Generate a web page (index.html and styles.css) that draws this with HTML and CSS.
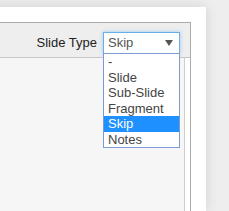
FILE: index.html
```html
<!DOCTYPE html>
<html>
<head>
    <meta charset="UTF-8">
    <meta name="viewport" content="width=device-width, initial-scale=1.0">
    <title>Slide Type</title>
    <link rel="stylesheet" href="styles.css">
</head>
<body>

    <div class="panel">
        <div class="cell">
            <div class="toolbar">
                <span class="toolbar-label">Slide Type</span>
                <div class="picker">
                    <div class="picker-value">Skip</div>
                    <svg class="picker-arrow" width="8" height="6" viewBox="0 0 8 6"><path d="M0 0 H8 L4 6 Z" fill="#555"/></svg>
                    <ul class="picker-list">
                        <li>-</li>
                        <li>Slide</li>
                        <li>Sub-Slide</li>
                        <li>Fragment</li>
                        <li class="selected">Skip</li>
                        <li>Notes</li>
                    </ul>
                </div>
            </div>
            <div class="cell-frame">
                <div class="cell-body"></div>
            </div>
        </div>
    </div>

</body>
</html>
```

FILE: styles.css
```css
html, body {
    height: 100%;
}
body {
    margin: 0;
    font-family: "Liberation Sans", Arial, sans-serif;
    font-size: 13px;
    background-color: #eeeeee;
    overflow: hidden;
}
.panel {
    margin-top: 7px;
    margin-left: -20px;
    width: 226px;
    height: calc(100% - 7px);
    padding-top: 15px;
    background-color: #ffffff;
    box-shadow: 0 0 12px rgba(0, 0, 0, 0.12);
    box-sizing: border-box;
}
.cell {
    display: flex;
    flex-direction: column;
    width: 211px;
    height: 100%;
    border: 1px solid #ababab;
    border-bottom: none;
    box-sizing: border-box;
}
.toolbar {
    display: flex;
    justify-content: flex-end;
    align-items: center;
    height: 22px;
    padding: 9px 10px 3px 0;
    background-color: #eeeeee;
    border-bottom: 1px solid #c6c6c6;
}
.toolbar-label {
    color: #222;
    line-height: 22px;
    margin-right: 6px;
}
.picker {
    position: relative;
    width: 77px;
    height: 22px;
    background-color: #ffffff;
    border: 1px solid #66afe9;
    box-shadow: 0 0 4px rgba(102, 175, 233, 0.6);
    box-sizing: border-box;
}
.picker-value {
    color: #555;
    line-height: 20px;
    padding-left: 4px;
}
.picker-arrow {
    position: absolute;
    right: 6px;
    top: 7px;
}
.picker-list {
    position: absolute;
    left: -1px;
    top: 20px;
    width: 77px;
    margin: 0;
    padding: 0;
    list-style: none;
    background-color: #ffffff;
    border: 1px solid #7c9bd2;
    box-sizing: border-box;
    z-index: 2;
}
.picker-list li {
    height: 15.5px;
    line-height: 15.5px;
    padding-left: 4px;
    color: #444;
}
.picker-list li.selected {
    background-color: #1e90ff;
    color: #ffffff;
}
.cell-frame {
    flex: 1;
    padding-right: 5px;
    background-color: #ffffff;
}
.cell-body {
    height: 100%;
    background-color: #f6f6f6;
    border-right: 1px solid #cfcfcf;
}
```
